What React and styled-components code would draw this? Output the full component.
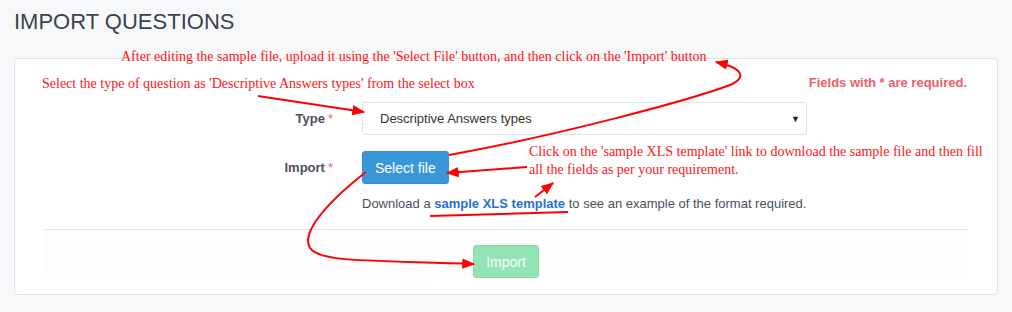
import React from "react";
import styled, { createGlobalStyle } from "styled-components";

const GlobalStyle = createGlobalStyle`
  html, body {
    margin: 0;
    padding: 0;
    background: #f7f8fa;
    font-family: "Liberation Sans", Arial, sans-serif;
  }
`;

const Page = styled.div`
  position: relative;
  width: 1012px;
  height: 312px;
  padding: 0 14px;
  box-sizing: border-box;
  overflow: hidden;
`;

const Title = styled.h2`
  margin: 0;
  padding-top: 10px;
  font-size: 22px;
  font-weight: 400;
  line-height: 24px;
  color: #3c424d;
`;

const Card = styled.div`
  margin-top: 24px;
  background: #fff;
  border: 1px solid #dde3ea;
  border-radius: 4px;
  padding: 17px 30px 16px;
`;

const Required = styled.div`
  text-align: right;
  font-size: 13px;
  font-weight: 700;
  color: #f25c68;
  line-height: 14px;
`;

const Form = styled.div`
  display: grid;
  grid-template-columns: 288px 445px;
  column-gap: 29px;
  row-gap: 16px;
  margin-top: 12px;
  align-items: center;
`;

const Label = styled.label`
  text-align: right;
  font-size: 13px;
  font-weight: 700;
  color: #4b505a;
  align-self: ${(p) => (p.$top ? "start" : "center")};
  padding-top: ${(p) => (p.$top ? "9px" : "0")};
`;

const Star = styled.span`
  color: #f0616b;
  font-weight: 400;
  margin-left: 3px;
`;

const SelectBox = styled.div`
  height: 33px;
  box-sizing: border-box;
  border: 1px solid #dde3ea;
  border-radius: 3px;
  display: flex;
  align-items: center;
  justify-content: space-between;
  padding: 0 6px 0 17px;
  font-size: 13px;
  color: #333;
`;

const Caret = styled.span`
  font-size: 9px;
  color: #222;
`;

const Control = styled.div`
  display: flex;
  flex-direction: column;
  align-items: flex-start;
  gap: 12px;
`;

const Button = styled.button`
  height: 33px;
  padding: 0 ${(p) => p.$padX || "12px"};
  border-radius: 3px;
  border: 1px solid ${(p) => p.$border};
  background: ${(p) => p.$bg};
  color: #fff;
  font-family: "Liberation Sans", Arial, sans-serif;
  font-size: 14px;
`;

const Help = styled.div`
  font-size: 13px;
  color: #4b505a;
`;

const Link = styled.a`
  color: #2b70c8;
  font-weight: 700;
  text-decoration: none;
`;

const Footer = styled.div`
  margin-top: 18px;
  border-top: 1px solid #dde3ea;
  background: #fdfdfd;
  padding: 15px 0 0;
  display: flex;
  justify-content: center;
`;

const Note = styled.div`
  position: absolute;
  left: ${(p) => p.$x}px;
  top: ${(p) => p.$y}px;
  font-family: "Liberation Serif", "Times New Roman", serif;
  font-size: 14px;
  line-height: 18px;
  color: #ff1414;
  white-space: nowrap;
`;

const Overlay = styled.svg`
  position: absolute;
  left: 0;
  top: 0;
  pointer-events: none;
`;

function Arrows() {
  return (
    <Overlay width="1012" height="312" viewBox="0 0 1012 312">
      <defs>
        <marker
          id="head"
          viewBox="0 0 10 8"
          refX="9"
          refY="4"
          markerWidth="6.5"
          markerHeight="5.2"
          orient="auto"
          markerUnits="strokeWidth"
        >
          <path d="M0 0 L10 4 L0 8 Z" fill="#f00" />
        </marker>
      </defs>
      <g stroke="#f00" strokeWidth="2" fill="none">
        <path d="M258 96 L364 112" markerEnd="url(#head)" />
        <path
          d="M449 155 C560 135 690 100 730 85 C748 77 742 68 716 62"
          markerEnd="url(#head)"
        />
        <path d="M527 167 L447 173" markerEnd="url(#head)" />
        <path d="M535 197 L553 183" markerEnd="url(#head)" />
        <path d="M430 216 L568 212" />
        <path
          d="M366 172 C330 200 300 232 310 248 C320 262 360 260 474 264"
          markerEnd="url(#head)"
        />
      </g>
    </Overlay>
  );
}

export default function App() {
  return (
    <>
      <GlobalStyle />
      <Page>
        <Title>IMPORT QUESTIONS</Title>
        <Card>
          <Required>Fields with * are required.</Required>
          <Form>
            <Label>
              Type<Star>*</Star>
            </Label>
            <SelectBox>
              <span>Descriptive Answers types</span>
              <Caret>▼</Caret>
            </SelectBox>
            <Label $top>
              Import<Star>*</Star>
            </Label>
            <Control>
              <Button $bg="#3a98da" $border="#3590d0">
                Select file
              </Button>
              <Help>
                Download a <Link href="#">sample XLS template</Link> to see an
                example of the format required.
              </Help>
            </Control>
          </Form>
          <Footer>
            <Button $bg="#94e3b5" $border="#84d9a6">
              Import
            </Button>
          </Footer>
        </Card>
        <Note $x={121} $y={48}>
          After editing the sample file, upload it using the 'Select File'
          button, and then click on the 'Import' button
        </Note>
        <Note $x={42} $y={75}>
          Select the type of question as 'Descriptive Answers types' from the
          select box
        </Note>
        <Note $x={529} $y={143}>
          Click on the 'sample XLS template' link to download the sample file
          and then fill
          <br />
          all the fields as per your requirement.
        </Note>
        <Arrows />
      </Page>
    </>
  );
}
